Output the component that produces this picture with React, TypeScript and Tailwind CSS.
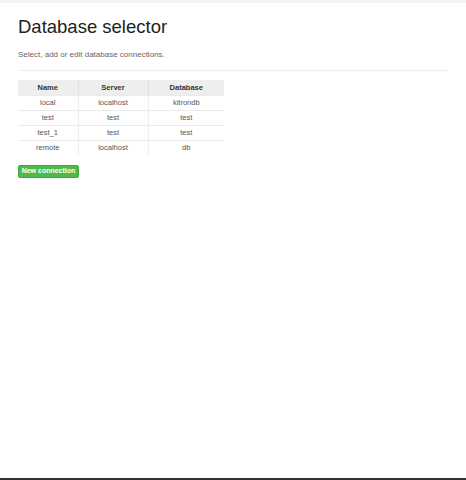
const rows = [
  { name: "local", server: "localhost", database: "kitrondb" },
  { name: "test", server: "test", database: "test" },
  { name: "test_1", server: "test", database: "test" },
  { name: "remote", server: "localhost", database: "db" },
];

export default function App() {
  return (
    <div
      className="flex h-[480px] w-[466px] flex-col bg-white text-[#333]"
      style={{ fontFamily: '"Liberation Sans", Arial, sans-serif' }}
    >
      <div className="h-[3px] shrink-0 bg-[#f4f4f4]" />
      <div className="flex-1 px-[18px]">
        <h1 className="mt-[12px] text-[18.5px] font-normal leading-[23px] text-[#222]">
          Database selector
        </h1>
        <p className="mt-[12px] text-[8px] leading-[10px] text-[#666]">
          Select, add or edit database connections.
        </p>
        <div className="mt-[10px] h-px w-[430px] bg-[#eeeeee]" />
        <table className="mt-[9px] w-[206px] border-collapse text-center text-[7.5px] text-[#555]">
          <thead>
            <tr className="h-[15px] bg-[#eeeeee]">
              <th className="w-[60px] border-r border-[#e0e0e0] font-semibold text-[#333]">Name</th>
              <th className="w-[70px] border-r border-[#e0e0e0] font-semibold text-[#333]">Server</th>
              <th className="font-semibold text-[#333]">Database</th>
            </tr>
          </thead>
          <tbody>
            {rows.map((r) => (
              <tr key={r.name} className="h-[15px] border-t border-[#eaeaea]">
                <td className="border-r border-[#eeeeee]">{r.name}</td>
                <td className="border-r border-[#eeeeee]">{r.server}</td>
                <td>{r.database}</td>
              </tr>
            ))}
          </tbody>
        </table>
        <button
          type="button"
          className="mt-[10px] flex h-[13px] w-[61px] items-center justify-center rounded-[2px] border border-[#3fa63f] bg-[#4cbb4c] text-[7px] font-semibold text-white"
        >
          New connection
        </button>
      </div>
      <div className="h-[2px] shrink-0 bg-[#333]" />
    </div>
  );
}
